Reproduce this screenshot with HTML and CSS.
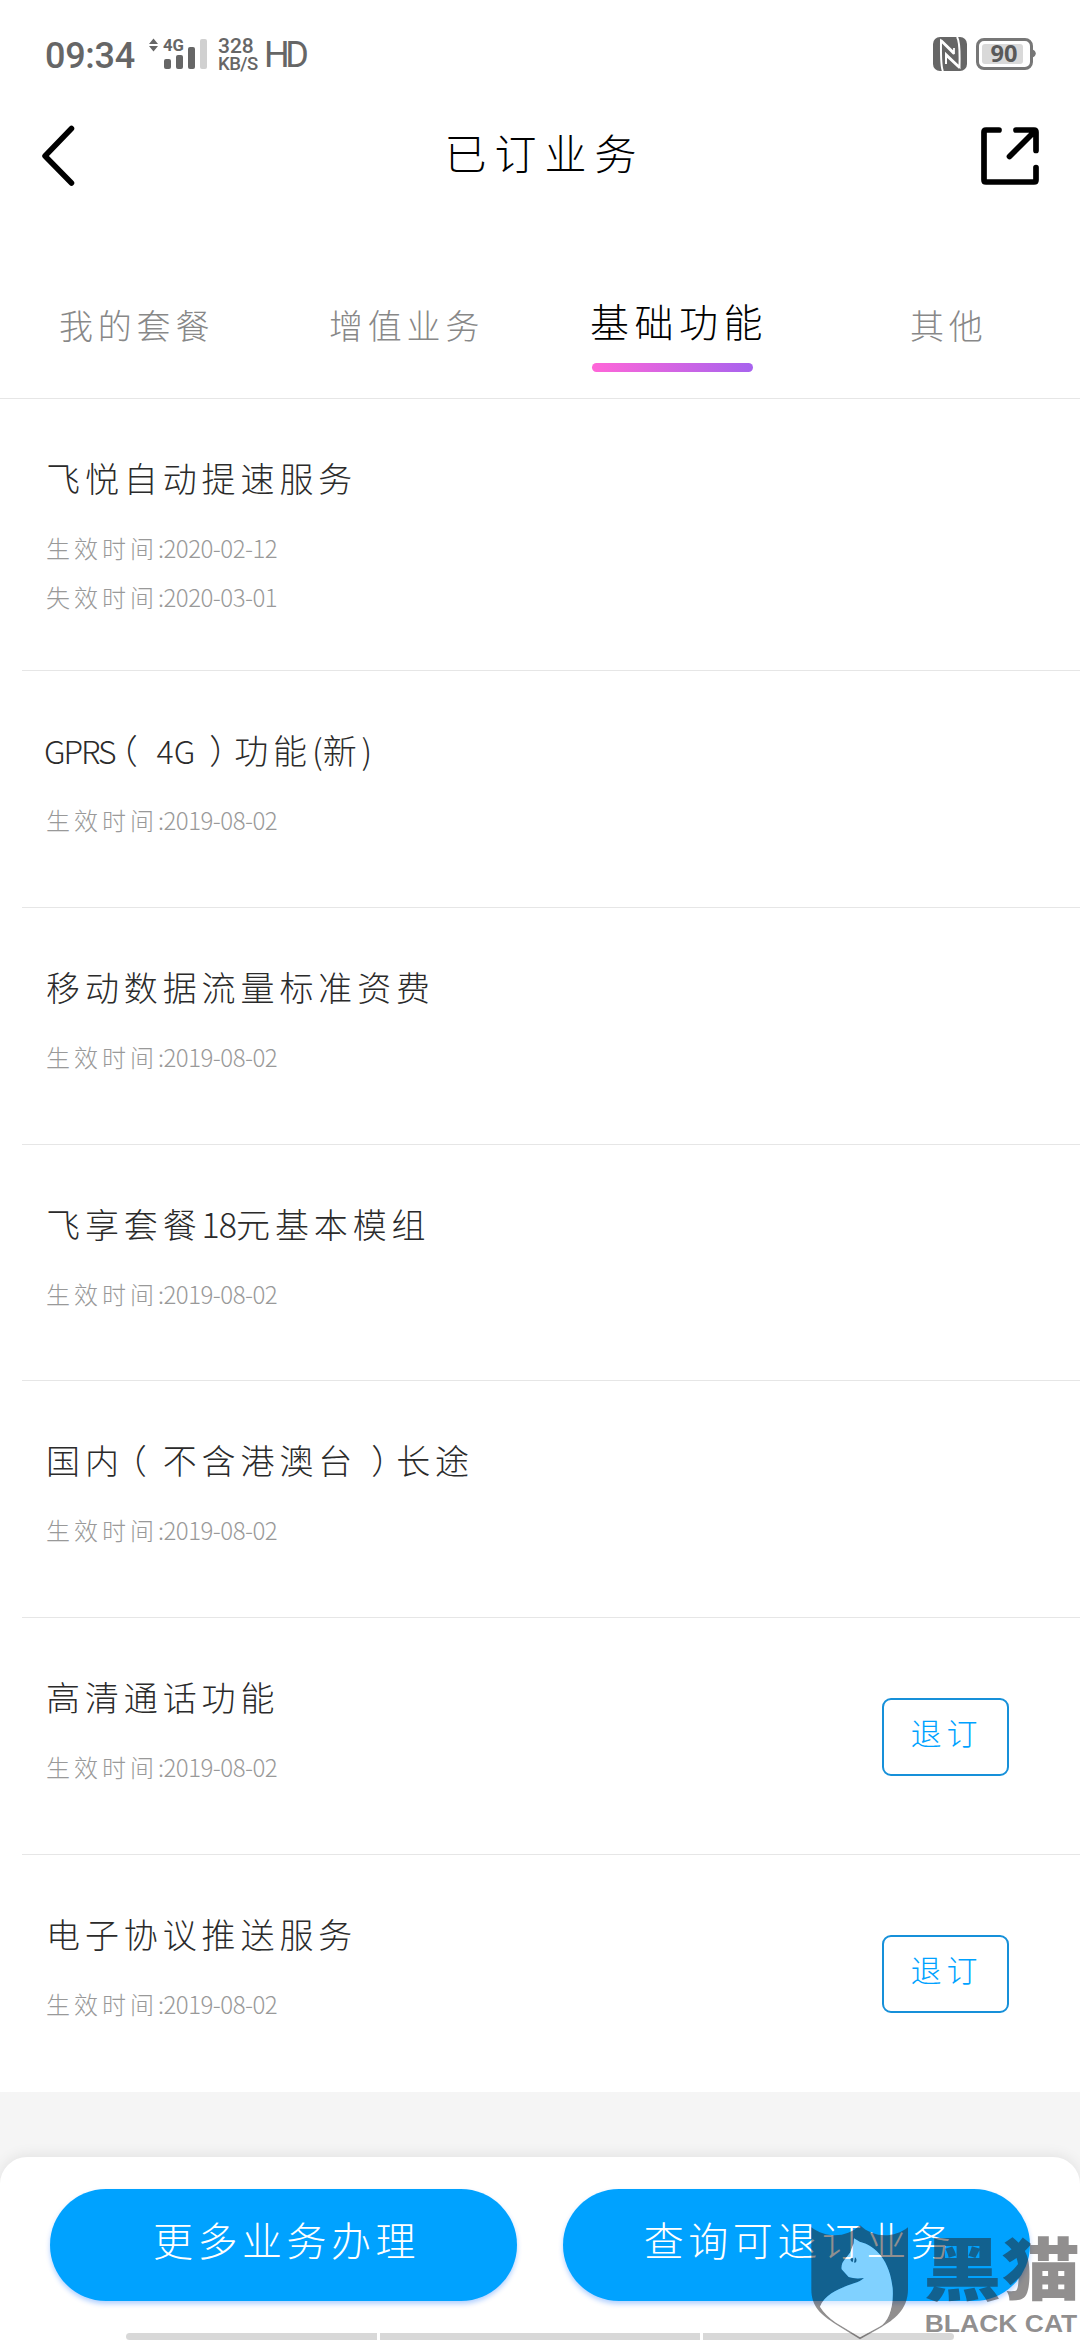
FILE: index.html
```html
<!DOCTYPE html>
<html lang="zh-CN">
<head>
<meta charset="utf-8">
<title>已订业务</title>
<link rel="stylesheet" href="styles.css">
</head>
<body>
<div class="screen">
  <div class="status">
    <span class="clock">09:34</span>
    <svg class="signal" width="60" height="34" viewBox="0 0 60 34">
      <path d="M1 8 5.500 2.500 10 8ZM1 10 5.500 15.500 10 10Z" fill="#666"/>
      <text class="net" x="15" y="15" textLength="21" lengthAdjust="spacingAndGlyphs">4G</text>
      <rect x="16" y="23" width="7" height="10" rx="2" fill="#666"/>
      <rect x="28" y="19" width="7" height="14" rx="2" fill="#666"/>
      <rect x="40" y="11" width="7" height="22" rx="2" fill="#666"/>
      <rect x="52" y="3" width="7" height="30" rx="2" fill="#d0d0d0"/>
    </svg>
    <div class="speed"><span class="rate">328</span><span class="unit">KB/S</span></div>
    <span class="hd">HD</span>
    <svg class="nfc" width="34" height="34" viewBox="0 0 34 34">
      <rect width="34" height="34" rx="7" fill="#666"/>
      <path d="M10 34C7.500 30 8 12 8 4L21 17M24 0C27.500 5 26.500 22 26.500 30L13 17V27" fill="none" stroke="#fff" stroke-width="2"/>
      <path d="M8 3 21 15.500V11M26.500 31 13 18.500" fill="none" stroke="#fff" stroke-width="1.800"/>
    </svg>
    <svg class="battery" width="60" height="32" viewBox="0 0 60 32">
      <path d="M56 11.500c5 1 5 7 0 8Z" fill="#777"/>
      <rect x="1.500" y="1.500" width="54" height="29" rx="6.500" fill="#fff" stroke="#777" stroke-width="3"/>
      <rect x="6" y="6" width="41" height="20" rx="3" fill="#d9d9d9"/>
      <text class="charge" x="14.500" y="24" textLength="27" lengthAdjust="spacingAndGlyphs">90</text>
    </svg>
  </div>

  <header class="header">
    <svg width="34" height="62" viewBox="0 0 34 62"><path d="M30.500 3.500 4 31 30.500 58" fill="none" stroke="#000" stroke-width="5.500" stroke-linecap="round" stroke-linejoin="round"/></svg>
    <h1 class="title">已订业务</h1>
    <svg width="58" height="58" viewBox="0 0 58 58"><path d="M18 3H5Q3 3 3 5V53Q3 55 5 55H53Q55 55 55 53V40.500M35 3H53Q55 3 55 5V23.500M54 4 28.500 29.500" fill="none" stroke="#000" stroke-width="5.700" stroke-linecap="round" stroke-linejoin="round"/></svg>
  </header>

  <nav class="tabs">
    <div class="tab">我的套餐</div>
    <div class="tab">增值业务</div>
    <div class="tab active">基础功能</div>
    <div class="tab other">其他</div>
  </nav>

  <main class="list">
    <section class="row tall"><div class="info"><h2 class="name">飞悦自动提速服务</h2><p class="date"><span class="label">生效时间</span>:2020-02-12</p><p class="date"><span class="label">失效时间</span>:2020-03-01</p></div></section>
    <section class="row"><div class="info"><h2 class="name"><span class="latin">GPRS</span><span class="open">（</span><span class="latin gen">4G</span><span class="close">）</span>功能<span class="paren">(</span>新<span class="paren">)</span></h2><p class="date"><span class="label">生效时间</span>:2019-08-02</p></div></section>
    <section class="row"><div class="info"><h2 class="name">移动数据流量标准资费</h2><p class="date"><span class="label">生效时间</span>:2019-08-02</p></div></section>
    <section class="row"><div class="info"><h2 class="name">飞享套餐<span class="num">18</span>元基本模组</h2><p class="date"><span class="label">生效时间</span>:2019-08-02</p></div></section>
    <section class="row"><div class="info"><h2 class="name">国内<span class="open">（</span>不含港澳台<span class="close">）</span>长途</h2><p class="date"><span class="label">生效时间</span>:2019-08-02</p></div></section>
    <section class="row"><div class="info"><h2 class="name">高清通话功能</h2><p class="date"><span class="label">生效时间</span>:2019-08-02</p></div><button class="cancel">退订</button></section>
    <section class="row"><div class="info"><h2 class="name">电子协议推送服务</h2><p class="date"><span class="label">生效时间</span>:2019-08-02</p></div><button class="cancel">退订</button></section>
  </main>

  <footer class="footer">
    <div class="actions">
      <button class="action">更多业务办理</button>
      <button class="action">查询可退订业务</button>
    </div>
    <div class="gesture"><i class="first"></i><i class="mid"></i><i class="last"></i></div>
  </footer>

  <svg class="watermark" width="300" height="140" viewBox="0 0 900 420">
    <path fill="#242020" fill-opacity=".5" fill-rule="evenodd" d="M94 82C140 116 200 114 240 76C280 114 340 116 384 82V268C384 330 340 360 304 382L240 418L166 372C125 345 94 322 94 268ZM120 320C136 278 190 262 222 250Q242 244 252 234Q225 238 206 231L185 208Q182 190 198 174L211 157L221 130L222 115L239 125C290 137 330 185 338 265C342 320 325 368 298 380L240 412L168 368Q136 346 120 320Z"/>
    <path fill="#fff" fill-opacity=".5" d="M120 320C136 278 190 262 222 250Q242 244 252 234Q225 238 206 231L185 208Q182 190 198 174L211 157L221 130L222 115L239 125C290 137 330 185 338 265C342 320 325 368 298 380L240 412L168 368Q136 346 120 320Z"/>
    <path fill="#126090" d="M211 177Q217 172 220 176L218 187Q212 186 211 177ZM225 172Q232 177 228 187L222 188Z"/>
    <text class="brand" x="430" y="286" textLength="470" lengthAdjust="spacingAndGlyphs">黑猫</text>
    <text class="brand-en" x="434" y="396" textLength="458" lengthAdjust="spacingAndGlyphs">BLACK CAT</text>
  </svg>
</div>
</body>
</html>
```

FILE: styles.css
```css
* { box-sizing: border-box; margin: 0; padding: 0; }
body { background: #fff; font-family: "Noto Sans CJK SC", sans-serif; font-weight: 300; }
svg { display: block; flex: none; }
button { font: inherit; border: 0; background: none; }

.screen { position: relative; width: 1080px; height: 2340px; overflow: hidden; display: flex; flex-direction: column; background: #fff; }

.status { height: 108px; padding: 36px 45px 0 45px; display: flex; align-items: flex-start; color: #666; font-family: Roboto, sans-serif; }
.clock { width: 103px; font-size: 36px; line-height: 40px; font-weight: 500; letter-spacing: -0.300px; white-space: nowrap; }
.signal { margin-right: 10px; }
.net { font: 700 17px Roboto, sans-serif; fill: #666; }
.speed { width: 46px; padding-top: 1px; display: flex; flex-direction: column; font-weight: 500; white-space: nowrap; }
.rate { font-size: 21px; line-height: 19px; }
.unit { font-size: 18.500px; line-height: 16px; letter-spacing: -0.500px; }
.hd { font-size: 36px; line-height: 38px; letter-spacing: -4.500px; font-weight: 400; }
.nfc { margin: 1px 9px 0 auto; }
.battery { margin-top: 2px; margin-right: -1px; }
.charge { font: 700 23px "Noto Sans", sans-serif; fill: #595959; }

.header { height: 96px; padding: 0 41px; display: flex; align-items: center; justify-content: space-between; }
.title { font-size: 42px; line-height: 60px; font-weight: 300; letter-spacing: 8px; margin: -8px 0 0 33px; }

.tabs { height: 195px; padding: 96px 0 0 59px; display: flex; align-items: flex-start; border-bottom: 1px solid #e6e6e6; }
.tab { width: 270px; font-size: 34px; line-height: 50px; letter-spacing: 4.800px; color: #888; white-space: nowrap; }
.tab.active { width: auto; margin: -5px 0 0 -9px; font-size: 39px; line-height: 50px; letter-spacing: 5.500px; color: #000; }
.tab.active::after { content: ""; display: block; width: 161px; height: 9px; margin: 18px 0 0 2px; border-radius: 5px; background: linear-gradient(90deg, #ff66d8, #a763ee); }
.tab.other { width: auto; margin-left: 142px; }

.list { height: 1693px; display: flex; flex-direction: column; }
.row { height: 237px; margin-left: 22px; padding: 0 72px 0 24px; display: flex; justify-content: space-between; border-bottom: 1px solid #e6e6e6; }
.row.tall { height: 271px; margin-left: 0; padding-left: 46px; border-bottom: 0; }
.row.tall + .row { height: 238px; border-top: 1px solid #e6e6e6; }
.row:last-child { border-bottom: 0; }
.info { padding-top: 54px; }
.name { height: 71px; font-size: 34px; line-height: 50px; font-weight: 300; letter-spacing: 4.900px; color: #2b2b2b; white-space: nowrap; }
.latin { font-size: 32px; margin-left: -2px; letter-spacing: -2px; }
.gen { margin-left: 3px; letter-spacing: 0; }
.open { margin: 0 11px 0 -11px; }
.close { margin: 0 -14px 0 14px; }
.paren { letter-spacing: 0; }
.num { letter-spacing: -1px; }
.date { height: 49px; font-size: 24px; line-height: 48px; letter-spacing: -0.500px; color: #999; white-space: nowrap; }
.label { letter-spacing: 4px; }
.cancel { width: 127px; height: 78px; margin-top: 80px; margin-right: -1px; padding-bottom: 11px; border: 2px solid #1690d9; border-radius: 9px; font-size: 31px; line-height: 44px; letter-spacing: 5px; text-indent: 2px; color: #00a2ff; }

.footer { flex: 1; padding-top: 65px; background: #f5f5f5; }
.actions { height: 176px; padding: 32px 50px 0; display: flex; gap: 46px; align-items: flex-start; background: #fff; border-radius: 27px 27px 0 0; box-shadow: 0 -2px 14px rgba(0, 0, 0, .08); }
.action { flex: 1; height: 112px; padding-bottom: 12px; border-radius: 56px; background: #00a2ff; box-shadow: 0 3px 5px rgba(0, 102, 255, .3); font-size: 40px; line-height: 56px; letter-spacing: 4.500px; text-indent: 6px; color: #fff; }
.gesture { height: 7px; padding-left: 126px; display: flex; gap: 3px; background: #fff; }
.gesture i { height: 7px; background: #d8d8d8; }
.first { width: 251px; border-radius: 4px 0 0 4px; }
.mid { width: 320px; }
.last { width: 251px; border-radius: 0 4px 4px 0; }

.watermark { position: absolute; right: 0; bottom: 0; }
.brand { font: 900 206px "Noto Sans CJK SC", sans-serif; fill: #242020; fill-opacity: .5; }
.brand-en { font: 700 70px "Liberation Sans", sans-serif; fill: #242020; fill-opacity: .5; }
```
